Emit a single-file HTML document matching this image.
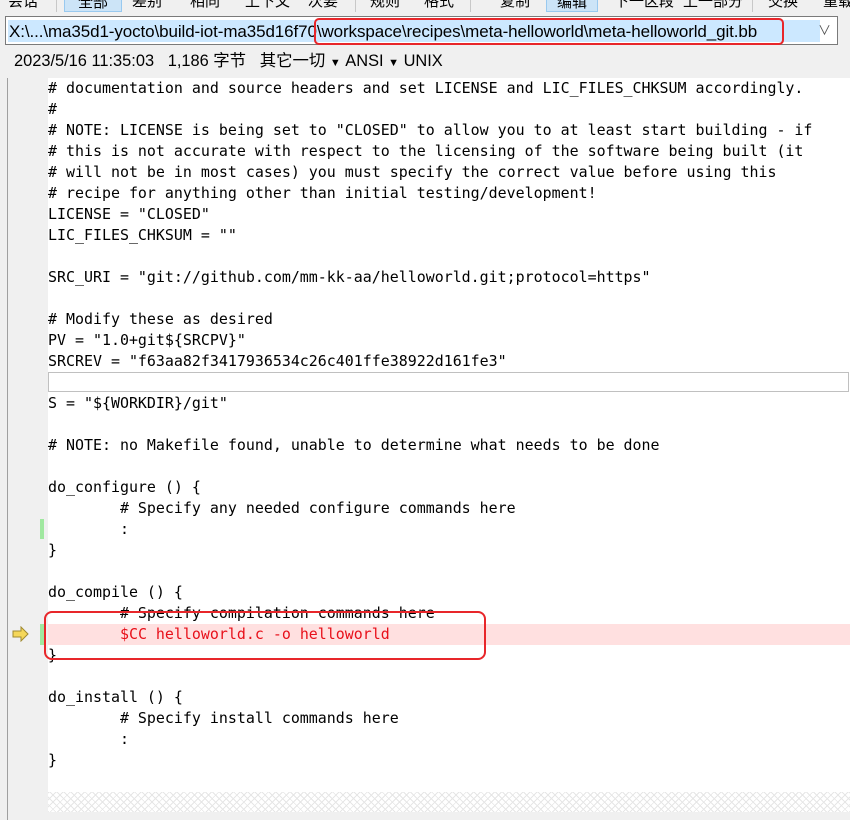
<!DOCTYPE html>
<html><head><meta charset="utf-8"><style>
body{margin:0;width:850px;height:820px;overflow:hidden;background:#f0f0f0;font-family:"Liberation Sans","Noto Sans CJK SC",sans-serif;position:relative}
.tb{position:absolute;top:-8px;left:0;height:20px;font-size:15px;white-space:nowrap}
.tb span{position:absolute;top:0;height:20px;line-height:20px}
.sel{background:#cce4f7;border:1px solid #99c9ef;box-sizing:border-box}
.sep{position:absolute;top:0;width:1px;height:20px;background:#c8c8c8}
.path{position:absolute;left:5px;top:16px;width:833px;height:29px;background:#fff;border:1px solid #7a7a7a;box-sizing:border-box}
.pathsel{position:absolute;left:2px;top:3px;width:272px;height:22px;background:#cce8ff}
.pathtxt{position:absolute;left:3px;top:3px;font-size:17px;line-height:23px;color:#000;white-space:nowrap;letter-spacing:-0.1px}
.status{position:absolute;left:14px;top:51px;font-size:16.4px;line-height:21px;white-space:nowrap}
.ed{position:absolute;left:7px;top:78px;width:843px;height:742px;border-left:1px solid #a0a0a0;background:#f0f0f0}
.code{position:absolute;left:48px;top:78px;width:802px;height:714px;background:#fff}
pre{margin:0;position:absolute;left:48px;top:78px;font-family:"DejaVu Sans Mono","Liberation Mono",monospace;font-size:14.95px;line-height:21px;color:#000}
.hatch{position:absolute;left:48px;top:792px;width:802px;height:20px;background-color:#fff;background-image:repeating-linear-gradient(45deg,#e6e6e6 0 1px,transparent 1px 5px),repeating-linear-gradient(-45deg,#e6e6e6 0 1px,transparent 1px 5px)}
</style></head><body>
<div class="tb">
<span style="left:8px">会话</span><div class="sep" style="left:56px"></div>
<span class="sel" style="left:64px;width:58px;text-align:center">全部</span>
<span style="left:132px">差别</span><span style="left:190px">相同</span><span style="left:245px">上下文</span><span style="left:308px">次要</span>
<div class="sep" style="left:355px"></div><span style="left:370px">规则</span><span style="left:424px">格式</span><div class="sep" style="left:470px"></div>
<span style="left:500px">复制</span><span class="sel" style="left:546px;width:52px;text-align:center">编辑</span>
<span style="left:614px">下一区段</span><span style="left:683px">上一部分</span><div class="sep" style="left:752px"></div><span style="left:768px">交换</span><span style="left:823px">重载</span>
</div>
<div class="path"><div class="pathsel" style="width:812px"></div>
<div class="pathtxt">X:\...\ma35d1-yocto\build-iot-ma35d16f70\workspace\recipes\meta-helloworld\meta-helloworld_git.bb</div>
<div style="position:absolute;right:6px;top:3px;font-size:13px;color:#555">&#8744;</div></div>
<div style="position:absolute;left:314px;top:18px;width:470px;height:27px;border:2px solid #e8262a;border-radius:5px;box-sizing:border-box"></div>
<div class="status">2023/5/16 11:35:03&nbsp;&nbsp; 1,186 字节&nbsp;&nbsp; 其它一切 <span style="font-size:11px">▼</span> ANSI <span style="font-size:11px">▼</span> UNIX</div>
<div class="ed"></div>
<div class="code"></div>
<div style="position:absolute;left:48px;top:624px;width:802px;height:21px;background:#ffe0e0"></div>
<div style="position:absolute;left:48px;top:372px;width:801px;height:20px;border:1px solid #c0c0c0;box-sizing:border-box;background:#fff"></div>
<div style="position:absolute;left:40px;top:519px;width:4px;height:20px;background:#a0e8a0"></div>
<div style="position:absolute;left:40px;top:624px;width:4px;height:21px;background:#a0e8a0"></div>
<svg style="position:absolute;left:12px;top:626px" width="18" height="16"><path d="M1 5H9V1L16 8L9 15V11H1Z" fill="#f5d75a" stroke="#a08a30" stroke-width="1"/></svg>
<pre># documentation and source headers and set LICENSE and LIC_FILES_CHKSUM accordingly.
#
# NOTE: LICENSE is being set to "CLOSED" to allow you to at least start building - if
# this is not accurate with respect to the licensing of the software being built (it
# will not be in most cases) you must specify the correct value before using this
# recipe for anything other than initial testing/development!
LICENSE = "CLOSED"
LIC_FILES_CHKSUM = ""

SRC_URI = "git://github.com/mm-kk-aa/helloworld.git;protocol=https"

# Modify these as desired
PV = "1.0+git${SRCPV}"
SRCREV = "f63aa82f3417936534c26c401ffe38922d161fe3"

S = "${WORKDIR}/git"

# NOTE: no Makefile found, unable to determine what needs to be done

do_configure () {
        # Specify any needed configure commands here
        :
}

do_compile () {
        # Specify compilation commands here
        <span style="color:#e8101a">$CC helloworld.c -o helloworld</span>
}

do_install () {
        # Specify install commands here
        :
}</pre>
<div class="hatch"></div>
<div style="position:absolute;left:44px;top:611px;width:442px;height:49px;border:2px solid #e8262a;border-radius:8px;box-sizing:border-box"></div>
</body></html>
